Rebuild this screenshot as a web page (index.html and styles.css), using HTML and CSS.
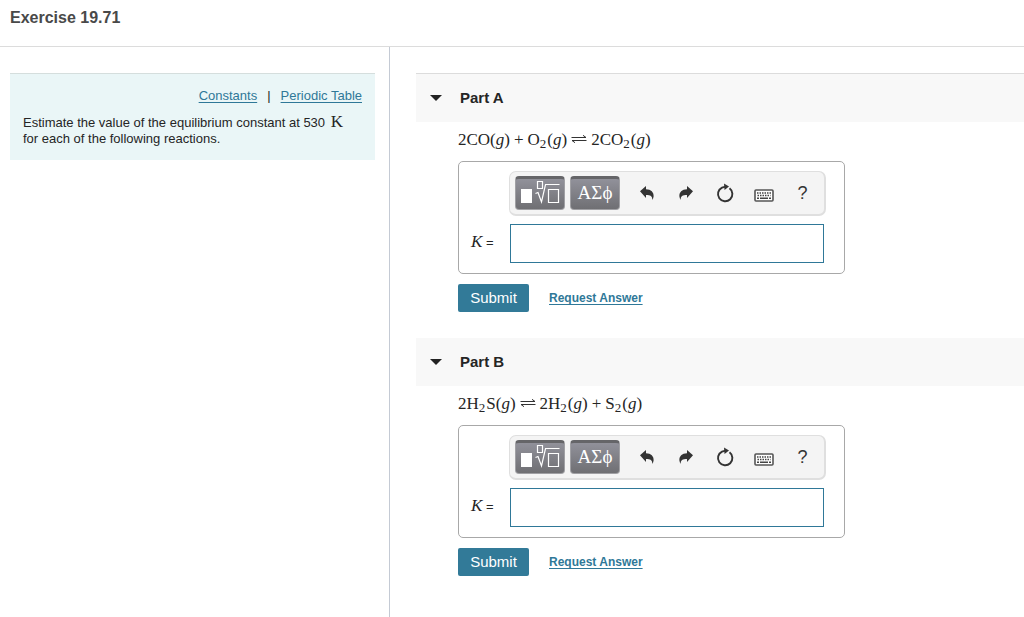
FILE: index.html
```
<!DOCTYPE html>
<html lang="en">
<head>
	<meta charset="UTF-8">
	<title>Exercise 19.71</title>
	<link rel="stylesheet" href="styles.css">
</head>
<body>
	<!-- shared icons -->
	<svg class="sprite" aria-hidden="true">
		<symbol id="i-template" viewBox="0 0 40 24">
			<rect x="1" y="8" width="11" height="14" fill="#fff"/>
			<path d="M17.500 .5h5v7h-5z M15.500 12.500l2.500-1 3.500 9.500 4-17.500h14 M28.500 8.500h10v13h-10z" fill="none" stroke="#fff" stroke-width="1.200"/>
		</symbol>
		<symbol id="i-undo" viewBox="0 0 16 16">
			<path d="M1 6.200L7 1v3.200c5 .2 8 3 7.600 7.300-.1 1.300-.6 2.500-1.300 3.500.2-3.800-1.800-5-6.300-5v3z" fill="#333"/>
		</symbol>
		<symbol id="i-redo" viewBox="0 0 16 16">
			<path d="M15 6.200L9 1v3.200c-5 .2-8 3-7.600 7.300.1 1.300.6 2.500 1.300 3.500-.2-3.800 1.800-5 6.300-5v3z" fill="#333"/>
		</symbol>
		<symbol id="i-reset" viewBox="0 0 18 20">
			<path d="M13.500 5.300A7.200 7.200 0 1 1 6 4.600L9.500 3.600" fill="none" stroke="#333" stroke-width="1.900"/>
			<path d="M8 .5l5 3-4.500 3.500z" fill="#333"/>
		</symbol>
		<symbol id="i-keyboard" viewBox="0 0 20 13">
			<rect x="1" y="1" width="18" height="11" rx="1" fill="#fff" stroke="#555" stroke-width="1.600"/>
			<path d="M3 4h14M3.500 6.500h13" stroke="#444" stroke-width="1.500" stroke-dasharray="1.500 1"/>
			<path d="M3 9.300h2M6 9.300h8M15 9.300h2" stroke="#444" stroke-width="1.500"/>
		</symbol>
		<symbol id="i-arrows" viewBox="0 0 16 8">
			<path d="M.5 2.500h14.500l-3-2.200M15.500 5.500H1l3 2.200" fill="none" stroke="#333"/>
		</symbol>
	</svg>

	<header class="top">
		<h1>Exercise 19.71</h1>
	</header>

	<div class="main">
		<aside class="left">
			<div class="intro">
				<div class="links">
					<a href="#">Constants</a><span class="bar">|</span><a href="#">Periodic Table</a>
				</div>
				<p>Estimate the value of the equilibrium constant at 530 <span class="unit">K</span><br>for each of the following reactions.</p>
			</div>
		</aside>

		<main class="right">
			<section class="part">
				<h2 class="part-head first"><span class="caret"></span>Part A</h2>
				<div class="part-body">
					<p class="formula">2CO(<i>g</i>)<span class="op">+</span>O<sub>2</sub>(<i>g</i>)<svg class="arrows" role="img" aria-label="⇌"><use href="#i-arrows"/></svg>2CO<sub>2</sub>(<i>g</i>)</p>
					<div class="answer">
						<div class="toolbar">
							<button class="dark" type="button" aria-label="Templates"><svg width="40" height="24"><use href="#i-template"/></svg></button>
							<button class="dark" type="button">ΑΣϕ</button>
							<button class="tool" type="button" aria-label="Undo"><svg width="16" height="16"><use href="#i-undo"/></svg></button>
							<button class="tool" type="button" aria-label="Redo"><svg width="16" height="16"><use href="#i-redo"/></svg></button>
							<button class="tool" type="button" aria-label="Reset"><svg width="18" height="20"><use href="#i-reset"/></svg></button>
							<button class="tool" type="button" aria-label="Keyboard"><svg class="keys" width="20" height="13"><use href="#i-keyboard"/></svg></button>
							<button class="tool" type="button">?</button>
						</div>
						<div class="field">
							<label for="ka"><i>K</i> =</label>
							<input id="ka" type="text">
						</div>
					</div>
					<div class="actions">
						<button class="submit" type="submit">Submit</button>
						<a href="#">Request Answer</a>
					</div>
				</div>
			</section>

			<section class="part">
				<h2 class="part-head"><span class="caret"></span>Part B</h2>
				<div class="part-body">
					<p class="formula">2H<sub>2</sub>S(<i>g</i>)<svg class="arrows" role="img" aria-label="⇌"><use href="#i-arrows"/></svg>2H<sub>2</sub>(<i>g</i>)<span class="op">+</span>S<sub>2</sub>(<i>g</i>)</p>
					<div class="answer">
						<div class="toolbar">
							<button class="dark" type="button" aria-label="Templates"><svg width="40" height="24"><use href="#i-template"/></svg></button>
							<button class="dark" type="button">ΑΣϕ</button>
							<button class="tool" type="button" aria-label="Undo"><svg width="16" height="16"><use href="#i-undo"/></svg></button>
							<button class="tool" type="button" aria-label="Redo"><svg width="16" height="16"><use href="#i-redo"/></svg></button>
							<button class="tool" type="button" aria-label="Reset"><svg width="18" height="20"><use href="#i-reset"/></svg></button>
							<button class="tool" type="button" aria-label="Keyboard"><svg class="keys" width="20" height="13"><use href="#i-keyboard"/></svg></button>
							<button class="tool" type="button">?</button>
						</div>
						<div class="field">
							<label for="kb"><i>K</i> =</label>
							<input id="kb" type="text">
						</div>
					</div>
					<div class="actions">
						<button class="submit" type="submit">Submit</button>
						<a href="#">Request Answer</a>
					</div>
				</div>
			</section>
		</main>
	</div>
</body>
</html>
```
FILE: styles.css
```
*{
	margin:0;
	padding:0;
	box-sizing:border-box;
}
body{
	min-height:100vh;
	display:flex;
	flex-direction:column;
	font-family:"Liberation Sans",Arial,sans-serif;
	font-size:13px;
	line-height:16px;
	color:#252525;
	background:#fff;
}
a{
	color:#2f7898;
	text-underline-offset:2px;
}
.sprite{
	display:none;
}
.top{
	padding:8px 10px 18px;
	border-bottom:1px solid #dcdcdc;
}
.top h1{
	font-size:16px;
	line-height:20px;
	color:#494949;
}
.main{
	flex:1;
	display:flex;
}
/* left column */
.left{
	width:38%;
	min-width:390px;
	padding:26px 14px 0 10px;
	border-right:1px solid #c4cad4;
}
.intro{
	padding:14px 13px 13px;
	border-top:1px solid #d5dedd;
	background:#eaf6f7;
}
.links{
	margin-bottom:10px;
	text-align:right;
}
.bar{
	margin:0 10px;
}
.unit{
	margin-left:2px;
	font-family:"Liberation Serif",serif;
	font-size:17px;
	line-height:16px;
}
/* right column */
.right{
	flex:1;
	padding:26px 0 0 26px;
}
.part{
	margin-bottom:26px;
}
.part-head{
	display:flex;
	align-items:center;
	height:48px;
	padding-left:14px;
	font-size:15px;
	background:#f8f8f8;
}
.part-head.first{
	height:49px;
	border-top:1px solid #dcdcdc;
}
.caret{
	margin-right:18px;
	border:6px solid transparent;
	border-top-color:#222;
	border-bottom:0;
}
.part-body{
	padding-left:42px;
}
.formula{
	height:39px;
	font-family:"Liberation Serif",serif;
	font-size:17px;
	line-height:36px;
	white-space:nowrap;
}
.formula sub{
	margin-right:1px;
	font-size:13px;
	line-height:0;
	vertical-align:-3px;
}
.op{
	margin:0 4px;
}
.arrows{
	width:16px;
	height:8px;
	margin:0 4px;
	vertical-align:2px;
}
.answer{
	width:387px;
	padding:9px 18px 10px 10px;
	border:1px solid #a8a8a8;
	border-radius:5px;
}
.toolbar{
	display:flex;
	align-items:center;
	height:45px;
	margin-left:40px;
	padding-left:5px;
	border:2px solid #dfdfdf;
	border-width:1px 2px 2px 1px;
	border-radius:7px;
	background:#f4f4f4;
}
.dark{
	display:flex;
	align-items:center;
	justify-content:center;
	width:50px;
	height:34px;
	margin-right:5px;
	padding-bottom:2px;
	border:1px solid #a0a0a4;
	border-top:3px solid #656568;
	border-radius:4px;
	background:linear-gradient(#91919a,#6f6f73);
	color:#fff;
	font-family:"Liberation Serif",serif;
	font-size:19px;
}
.dark + .tool{
	margin-left:2px;
}
.tool{
	display:flex;
	align-items:center;
	justify-content:center;
	width:39px;
	height:34px;
	border:0;
	background:none;
	color:#333;
	font-family:"Liberation Sans",Arial,sans-serif;
	font-size:18px;
}
.keys{
	margin-top:4px;
}
.field{
	display:flex;
	align-items:center;
	margin-top:8px;
}
.field label{
	width:41px;
	padding:0 0 3px 2px;
}
.field label i{
	font-family:"Liberation Serif",serif;
	font-size:17px;
}
.field input{
	flex:1;
	min-width:0;
	height:39px;
	margin-right:2px;
	padding:0 8px;
	border:1px solid #2f7898;
	background:#fff;
	font-size:16px;
}
.actions{
	display:flex;
	align-items:center;
	margin-top:10px;
}
.submit{
	width:71px;
	height:28px;
	margin-right:20px;
	padding-bottom:2px;
	border:0;
	border-radius:2px;
	background:#327a98;
	color:#fff;
	font-family:"Liberation Sans",Arial,sans-serif;
	font-size:15px;
}
.actions a{
	font-size:12px;
	font-weight:bold;
}
```
